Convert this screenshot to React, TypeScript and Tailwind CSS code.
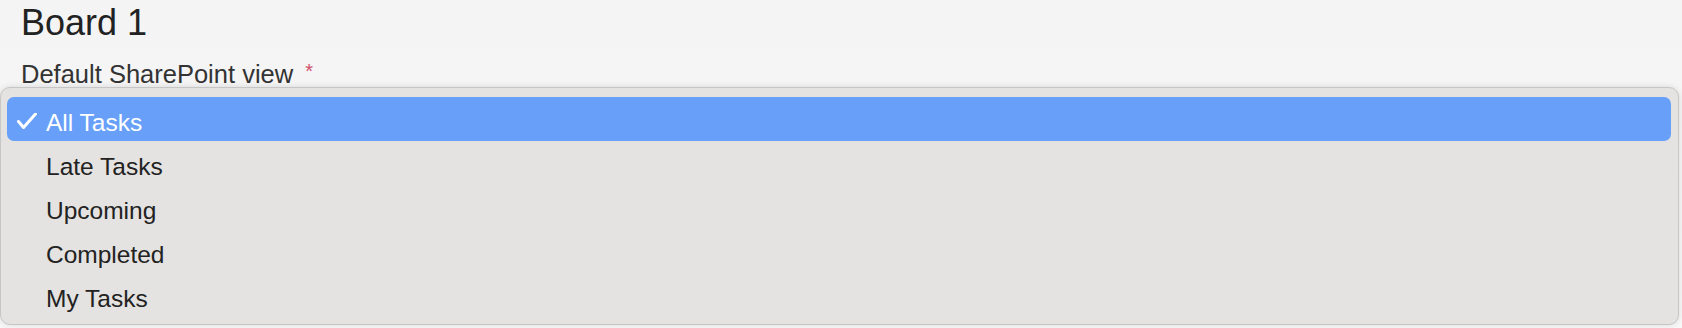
import React from "react";

const items = ["All Tasks", "Late Tasks", "Upcoming", "Completed", "My Tasks"];

export default function App() {
  return (
    <div
      className="w-[1682px] h-[328px] overflow-hidden bg-gradient-to-b from-[#f4f4f4] to-[#f8f8f8]"
      style={{ fontFamily: '"Liberation Sans", Arial, sans-serif' }}
    >
      <div className="pl-[21px] pt-[3px]">
        <div className="text-[36px] leading-[40px] text-[#222222]">Board 1</div>
        <div className="mt-[17px] flex items-start text-[25.5px] leading-[28px] text-[#333333]">
          <span>Default SharePoint view</span>
          <span className="ml-[12px] text-[#d0506a] text-[20px] leading-[20px] mt-[1px]">*</span>
        </div>
      </div>
      <div className="mt-[-1px] w-[1679px] h-[238px] rounded-[10px] bg-[#e4e3e1] border border-[#c6c6c6] shadow-[0_0_6px_rgba(0,0,0,0.12)] pt-[9px] pl-[6px]">
        {items.map((it, i) => (
          <div
            key={it}
            className={
              "relative h-[44px] w-[1664px] pt-[7px] text-[24.5px] leading-[38px] rounded-[7px] " +
              (i === 0 ? "bg-[#679ff9] text-white" : "text-[#222222]")
            }
          >
            {i === 0 && (
              <svg
                className="absolute left-[10px] top-[16px]"
                width="20"
                height="16"
                viewBox="0 0 20 16"
              >
                <path
                  d="M1.5 8.5 L6.5 14.5 L18.5 1"
                  fill="none"
                  stroke="white"
                  strokeWidth="3"
                  strokeLinecap="round"
                  strokeLinejoin="round"
                />
              </svg>
            )}
            <span className="pl-[39px]">{it}</span>
          </div>
        ))}
      </div>
    </div>
  );
}
